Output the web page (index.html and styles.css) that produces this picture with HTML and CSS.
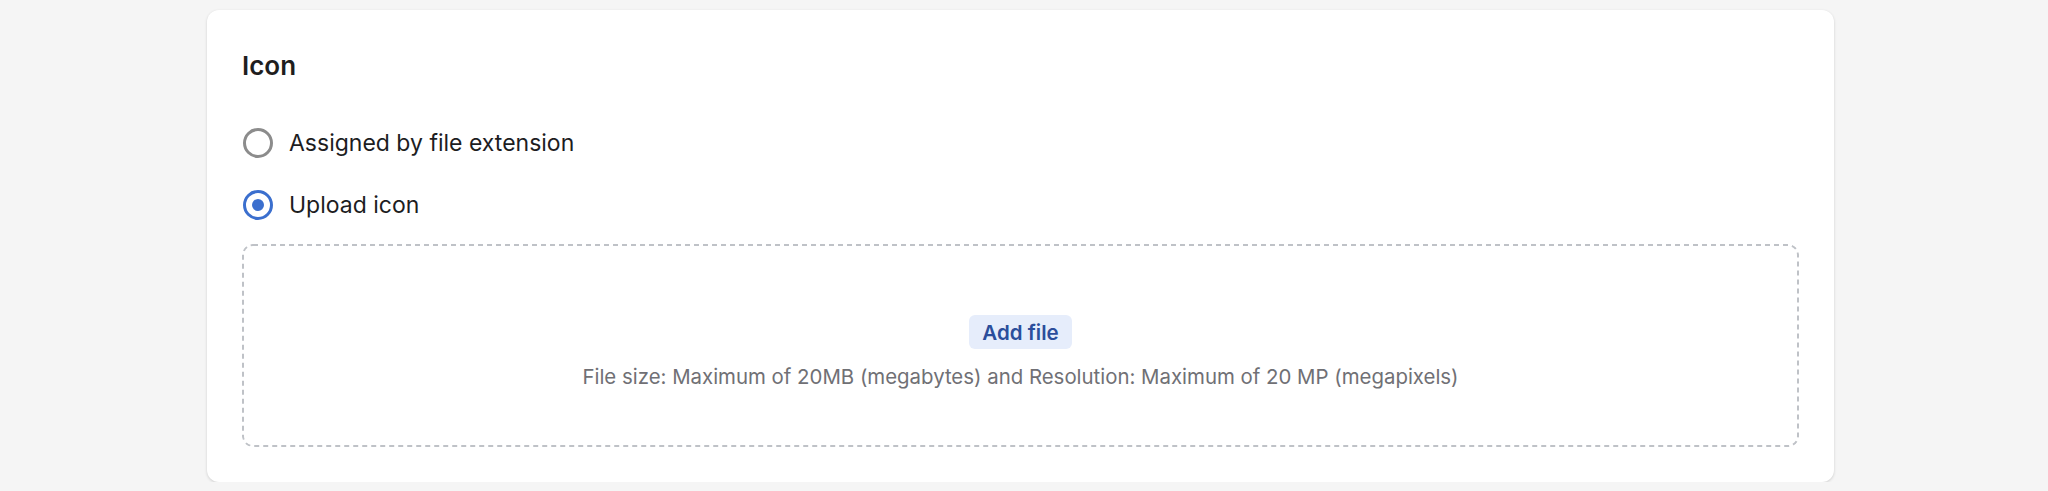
FILE: index.html
```html
<!DOCTYPE html>
<html>
<head>
<meta charset="utf-8">
<link rel="stylesheet" href="styles.css">
</head>
<body>
<div class="page">
  <section class="card">
    <h2 class="title">Icon</h2>
    <div class="options">
      <label class="option">
        <span class="radio"></span>
        <span class="label">Assigned by file extension</span>
      </label>
      <label class="option">
        <span class="radio checked"></span>
        <span class="label">Upload icon</span>
      </label>
    </div>
    <div class="dropzone">
      <button class="add-btn" type="button">Add file</button>
      <p class="hint">File size: Maximum of 20MB (megabytes) and Resolution: Maximum of 20 MP (megapixels)</p>
    </div>
  </section>
</div>
</body>
</html>
```

FILE: styles.css
```css
html, body {
  margin: 0;
  padding: 0;
  background: #f5f5f5;
  font-family: Inter, "Liberation Sans", sans-serif;
  color: #202020;
}

.page {
  padding: 10px 0 0 207px;
}

.card {
  box-sizing: border-box;
  width: 1627px;
  height: 472px;
  background: #ffffff;
  border-radius: 12px;
  box-shadow: 0 1px 3px rgba(0, 0, 0, 0.16);
  padding: 40px 35px 35px 35px;
  display: flex;
  flex-direction: column;
}

.title {
  margin: 0;
  font-size: 26px;
  line-height: 32px;
  font-weight: 600;
  color: #1e1e1e;
}

.options {
  margin-top: 46px;
  display: flex;
  flex-direction: column;
  gap: 32px;
}

.option {
  display: flex;
  align-items: center;
  gap: 16px;
  height: 30px;
  padding-left: 1px;
}

.radio {
  box-sizing: border-box;
  width: 30px;
  height: 30px;
  border-radius: 50%;
  border: 3px solid #8c8c8c;
  display: flex;
  align-items: center;
  justify-content: center;
}

.radio.checked {
  border-color: #3b6fce;
}

.radio.checked::after {
  content: "";
  width: 12px;
  height: 12px;
  border-radius: 50%;
  background: #3b6fce;
}

.label {
  font-size: 23px;
  line-height: 30px;
  color: #1d1d1f;
}

.dropzone {
  box-sizing: border-box;
  margin-top: 24px;
  height: 203px;
  border-radius: 10px;
  background-image: url("data:image/svg+xml,%3csvg xmlns='http://www.w3.org/2000/svg' width='100%25' height='100%25'%3e%3crect x='1' y='1' width='calc(100%25 - 2px)' height='calc(100%25 - 2px)' fill='none' rx='10' ry='10' stroke='%23bfc2c7' stroke-width='2' stroke-dasharray='5%2c 4'/%3e%3c/svg%3e");
  display: flex;
  flex-direction: column;
  align-items: center;
  padding-top: 71px;
}

.add-btn {
  font-family: inherit;
  border: none;
  background: #e6edfb;
  color: #2b4e9b;
  font-size: 20.5px;
  font-weight: 600;
  height: 34px;
  padding: 0 13px;
  border-radius: 6px;
}

.hint {
  margin: 15px 0 0 0;
  font-size: 20.4px;
  line-height: 26px;
  color: #707075;
}
```
